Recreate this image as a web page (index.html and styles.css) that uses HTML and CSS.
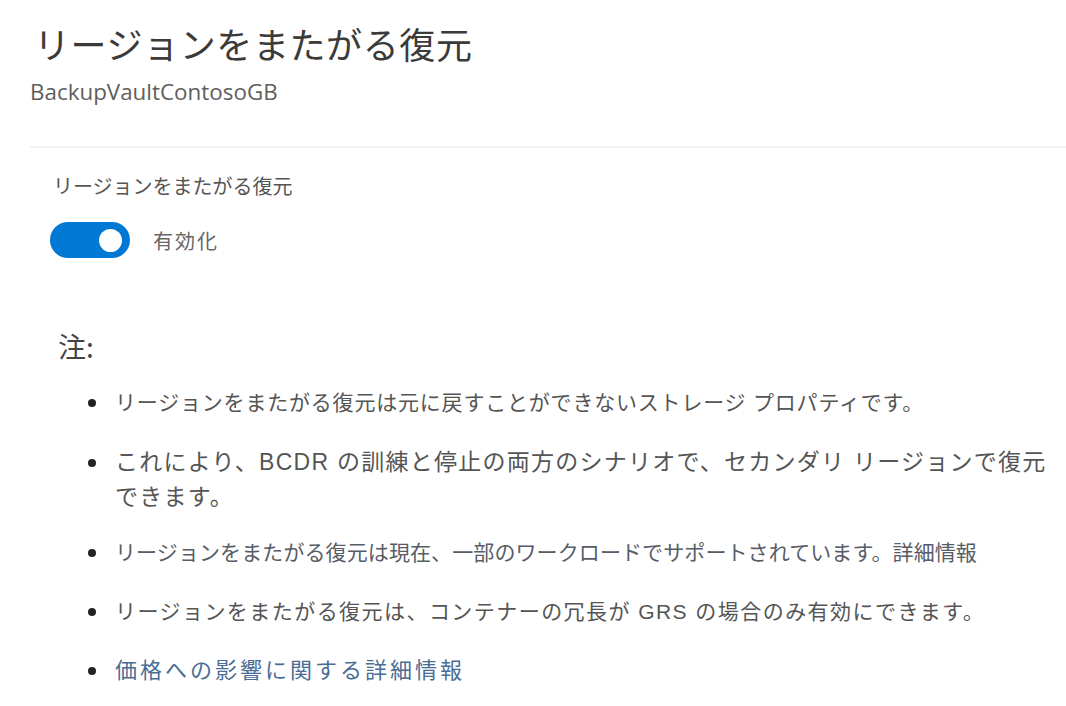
FILE: index.html
```html
<!DOCTYPE html>
<html lang="ja">
<head>
    <meta charset="UTF-8">
    <title>リージョンをまたがる復元</title>
    <link rel="stylesheet" href="styles.css">
</head>
<body>
    <div class="header">
        <h1 class="title">リージョンをまたがる復元</h1>
        <div class="subtitle">BackupVaultContosoGB</div>
    </div>
    <div class="divider"></div>

    <div class="setting">
        <div class="setting-label">リージョンをまたがる復元</div>
        <div class="toggle-row">
            <div class="toggle on"><span class="knob"></span></div>
            <span class="toggle-text">有効化</span>
        </div>
    </div>

    <div class="notes">
        <h2 class="notes-title">注:</h2>
        <ul class="notes-list">
            <li class="item-1">リージョンをまたがる復元は元に戻すことができないストレージ プロパティです。</li>
            <li class="item-2">これにより、BCDR の訓練と停止の両方のシナリオで、セカンダリ リージョンで復元できます。</li>
            <li class="item-3">リージョンをまたがる復元は現在、一部のワークロードでサポートされています。詳細情報</li>
            <li class="item-4">リージョンをまたがる復元は、コンテナーの冗長が GRS の場合のみ有効にできます。</li>
            <li class="item-5"><a href="#">価格への影響に関する詳細情報</a></li>
        </ul>
    </div>
</body>
</html>
```

FILE: styles.css
```css
body {
    margin: 0;
    padding: 0;
    background: #ffffff;
    font-family: "Noto Sans CJK JP", "Noto Sans", sans-serif;
}

.header {
    padding: 21px 0 0 30px;
}

.title {
    margin: 0 0 0 4px;
    font-size: 36px;
    line-height: 44px;
    font-weight: 400;
    letter-spacing: 0.6px;
    color: #3b3a39;
}

.subtitle {
    margin-top: 13px;
    font-family: "Open Sans", "Noto Sans", sans-serif;
    font-size: 22.4px;
    line-height: 28px;
    color: #605e5c;
}

.divider {
    margin: 40px 0 0 30px;
    height: 2px;
    background: #f3f3f3;
}

.setting {
    padding: 24px 0 0 50px;
}

.setting-label {
    margin-left: 3px;
    font-size: 20px;
    line-height: 28px;
    color: #555555;
}

.toggle-row {
    display: flex;
    align-items: center;
    gap: 23px;
    margin-top: 22px;
}

.toggle {
    width: 80px;
    height: 36px;
    border-radius: 18px;
    background: #0078d4;
    display: flex;
    align-items: center;
    justify-content: flex-end;
    padding-right: 8px;
    box-sizing: border-box;
}

.knob {
    width: 23px;
    height: 23px;
    border-radius: 50%;
    background: #ffffff;
}

.toggle-text {
    font-size: 20px;
    letter-spacing: 2px;
    color: #666666;
}

.notes {
    padding: 70px 0 0 58px;
}

.notes-title {
    margin: 0;
    font-size: 28px;
    line-height: 36px;
    font-weight: 400;
    color: #444444;
}

.notes-list {
    margin: 22px 0 0 0;
    padding: 0 0 0 57px;
    list-style: none;
    font-family: "Liberation Sans", "Noto Sans CJK JP", sans-serif;
    color: #555555;
}

.notes-list li {
    font-size: 21px;
    line-height: 34px;
    margin-bottom: 25px;
}

.notes-list li::before {
    content: "";
    display: inline-block;
    width: 8px;
    height: 8px;
    border-radius: 50%;
    background: #222222;
    margin-left: -27px;
    margin-right: 19px;
    vertical-align: 3px;
    letter-spacing: 0;
}

.item-1 {
    letter-spacing: 0.8px;
}

.notes-list .item-2 {
    font-size: 23px;
    line-height: 35px;
    letter-spacing: 1.25px;
    margin-bottom: 21px;
}

.item-3 {
    color: #575d68;
    letter-spacing: 0.1px;
}

.item-4 {
    letter-spacing: 1.45px;
}

.notes-list .item-5 {
    font-size: 22px;
}

.item-5 a {
    color: #4a6d94;
    text-decoration: none;
    letter-spacing: 3px;
}
```
